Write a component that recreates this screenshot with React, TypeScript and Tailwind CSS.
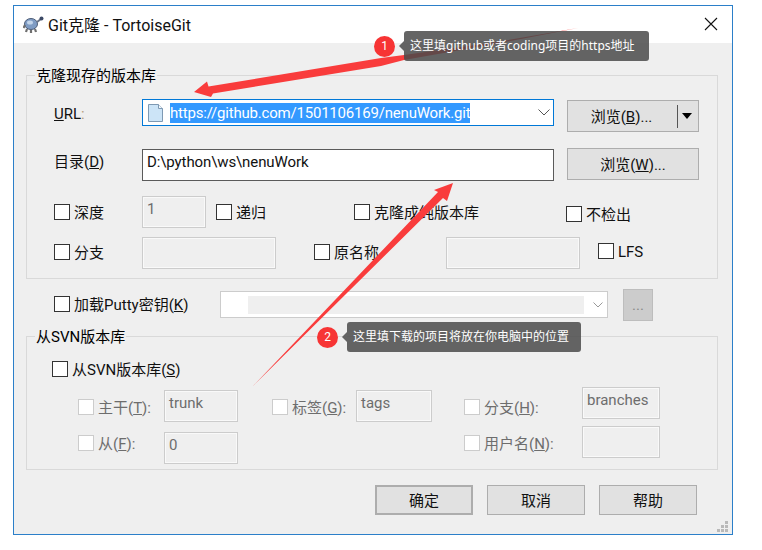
import React from 'react';

const Check: React.FC<{ label: React.ReactNode; disabled?: boolean; className?: string }> = ({ label, disabled, className = '' }) => (
    <div className={`flex items-center gap-[4px] ${disabled ? 'text-[#6d6d6d]' : 'text-[#111]'} ${className}`}>
        <span className={`size-4 shrink-0 border bg-white ${disabled ? 'border-[#cccccc]' : 'border-[#333333]'}`} />
        <span className="translate-y-px whitespace-nowrap">{label}</span>
    </div>
);

const Field: React.FC<{ value?: string; className?: string }> = ({ value, className = '' }) => (
    <div className={`h-8 shrink-0 border border-[#cccccc] pl-1 leading-6 text-[#6d6d6d] shadow-[inset_0_0_0_1px_#f9f9f9] ${className}`}>
        {value}
    </div>
);

const Btn: React.FC<{ children: React.ReactNode; className?: string }> = ({ children, className = '' }) => (
    <div className={`flex h-[30px] w-[98px] items-center justify-center border border-[#adadad] bg-[#e1e1e1] text-[#111] ${className}`}>
        <span className="translate-y-px">{children}</span>
    </div>
);

const Tip: React.FC<{ n: number; text: string; className: string; w: string }> = ({ n, text, className, w }) => (
    <div className={`absolute flex items-center ${className}`}>
        <span className="flex size-[21px] items-center justify-center rounded-full bg-[#f73434] text-[12px] text-white">{n}</span>
        <span className="ml-1 size-0 border-y-[5px] border-r-[5px] border-y-transparent border-r-[#636363]" />
        <span className={`flex h-[30px] items-center rounded-[3px] bg-[#4a4a4a]/85 pl-[6px] font-['Noto_Sans','Noto_Sans_CJK_SC',sans-serif] text-[12px] whitespace-nowrap text-white ${w}`}>{text}</span>
    </div>
);

const Turtle = () => (
    <svg width="21" height="18" viewBox="0 0 21 18" className="shrink-0">
        <ellipse cx="8" cy="8" rx="6.5" ry="5.5" fill="#7f9cc4" stroke="#4d5d78" />
        <ellipse cx="7" cy="6.5" rx="3" ry="2" fill="#c3d5ea" />
        <path d="M14 6 L18 3" stroke="#6b7486" strokeWidth="2" />
        <circle cx="18.5" cy="2.5" r="2" fill="#3c4a66" />
        <path d="M2 9 L0.5 12 M4 13 L3 16 M8 14 L8 17 M12 13 L13 16" stroke="#6f6f6f" strokeWidth="2.2" />
    </svg>
);

const Grip = () => (
    <svg width="12" height="12" viewBox="0 0 12 12" className="absolute right-[3px] bottom-[1px]" fill="#b9b9b9">
        <rect x="8" y="0" width="3" height="3" />
        <rect x="4" y="4" width="3" height="3" />
        <rect x="8" y="4" width="3" height="3" />
        <rect x="0" y="8" width="3" height="3" />
        <rect x="4" y="8" width="3" height="3" />
        <rect x="8" y="8" width="3" height="3" />
    </svg>
);

export default function App() {
    return (
        <div className="relative h-[550px] w-[762px] overflow-hidden bg-white pt-[5px] pl-[13px] font-['Roboto','Noto_Sans_CJK_SC',sans-serif] text-[15px] leading-5">
            <div className="relative flex h-[530px] w-[720px] flex-col border border-[#2b7fc9]">
                <div className="flex h-[37px] shrink-0 items-center bg-white pl-[9px]">
                    <Turtle />
                    <span className="ml-[4px] translate-y-px text-[16px] text-[#111]">Git克隆 - TortoiseGit</span>
                    <svg width="14" height="14" viewBox="0 0 14 14" className="mt-[-1px] mr-[14px] ml-auto" stroke="#111" strokeWidth="1.1" fill="none">
                        <path d="M1 1 L13 13 M13 1 L1 13" />
                    </svg>
                </div>

                <div className="flex-1 bg-[#efefef]">
                    <fieldset className="mt-[22px] ml-3 w-[692px] border border-[#d9d9d9] pb-[9px]">
                        <legend className="ml-2 px-[1px]"><span className="relative top-px">克隆现存的版本库</span></legend>
                        <div className="mt-[14px] flex h-[33px] items-start pl-[27px]">
                            <div className="w-[88px] pt-[5px] text-[#111]"><u>U</u>RL<span className="text-[#b59a7a]">:</span></div>
                            <div className="flex h-[27px] w-[412px] items-center border border-[#0078d7] bg-white pl-[5px]">
                                <svg width="15" height="18" viewBox="0 0 15 18" className="shrink-0">
                                    <path d="M0.5 0.5 H10.5 L14.5 4.5 V17.5 H0.5 Z" fill="#cce4f7" stroke="#7e99b3" />
                                    <path d="M10.5 0.5 V4.5 H14.5" fill="#f2f7fb" stroke="#7e99b3" />
                                </svg>
                                <span className="ml-[7px] bg-[#3399ff] tracking-[-0.2px] whitespace-nowrap text-white">https://github.com/1501106169/nenuWork.git</span>
                                <svg width="12" height="7" viewBox="0 0 12 7" className="mr-[3px] ml-auto" fill="none" stroke="#555">
                                    <path d="M0.5 0.5 L6 6 L11.5 0.5" />
                                </svg>
                            </div>
                            <div className="mt-px ml-[13px] flex h-8 w-[132px] items-center border border-[#adadad] bg-[#e1e1e1] text-[#111]">
                                <span className="w-[107px] translate-y-px text-center">浏览(<u>B</u>)...</span>
                                <span className="ml-[2px] h-[23px] w-px bg-[#555]" />
                                <span className="ml-[4px] size-0 border-x-[5.5px] border-t-[6px] border-x-transparent border-t-black" />
                            </div>
                        </div>
                        <div className="mt-[16px] flex h-[33px] items-start pl-[27px]">
                            <div className="w-[88px] pt-1 text-[#111]">目录(<u>D</u>)</div>
                            <div className="mt-px h-8 w-[412px] border border-[#5a5a5a] bg-white pl-1 leading-6 tracking-[-0.1px] text-[#111]">D:\python\ws\nenuWork</div>
                            <div className="ml-[13px] flex h-8 w-[132px] items-center justify-center border border-[#adadad] bg-[#e1e1e1] text-[#111]">
                                <span className="translate-y-px">浏览(<u>W</u>)...</span>
                            </div>
                        </div>
                        <div className="mt-[15px] flex h-8 items-center pl-[27px]">
                            <Check label="深度" className="w-[88px]" />
                            <Field value="1" className="w-16" />
                            <Check label="递归" className="ml-[10px] w-[138px]" />
                            <Check label="克隆成纯版本库" className="w-[212px]" />
                            <Check label="不检出" className="mt-1" />
                        </div>
                        <div className="mt-[9px] flex h-8 items-center pl-[27px]">
                            <Check label="分支" className="mb-[2px] w-[88px]" />
                            <Field className="w-[134px]" />
                            <Check label="原名称" className="mb-[2px] ml-[38px] w-[132px]" />
                            <Field className="w-[134px]" />
                            <Check label="LFS" className="mb-1 ml-[18px]" />
                        </div>
                    </fieldset>

                    <div className="mt-[10px] flex h-8 items-start pl-10">
                        <Check label={<>加载Putty密钥(<u>K</u>)</>} className="mt-[5px] w-[166px]" />
                        <div className="mt-[2px] flex h-[27px] w-[388px] items-center border border-[#cccccc] bg-white pl-[27px]">
                            <span className="h-[18px] w-[336px] bg-[#efefef]" />
                            <svg width="10" height="6" viewBox="0 0 10 6" className="ml-[9px]" fill="none" stroke="#999">
                                <path d="M0.5 0.5 L5 5 L9.5 0.5" />
                            </svg>
                        </div>
                        <div className="ml-[15px] flex h-8 w-[30px] items-center justify-center border border-[#bdbdbd] bg-[#cccccc] text-[#8a8a8a]">...</div>
                    </div>

                    <fieldset className="mt-[5px] ml-3 w-[692px] border border-[#d9d9d9] pb-[5px]">
                        <legend className="ml-2 px-[1px]"><span className="relative top-px">从SVN版本库</span></legend>
                        <div className="mt-[13px] pl-[25px]">
                            <Check label={<>从SVN版本库(<u>S</u>)</>} />
                        </div>
                        <div className="mt-2 flex items-start pl-[51px]">
                            <Check disabled label={<>主干(<u>T</u>):</>} className="mt-[10px] w-[86px]" />
                            <Field value="trunk" className="mt-[3px] w-[74px]" />
                            <Check disabled label={<>标签(<u>G</u>):</>} className="mt-[10px] ml-[34px] w-[84px]" />
                            <Field value="tags" className="mt-[3px] w-[76px]" />
                            <Check disabled label={<>分支(<u>H</u>):</>} className="mt-[10px] ml-8 w-[118px]" />
                            <Field value="branches" className="w-[78px]" />
                        </div>
                        <div className="mt-1 flex items-start pl-[51px]">
                            <Check disabled label={<>从(<u>F</u>):</>} className="mt-[7px] w-[86px]" />
                            <Field value="0" className="mt-[6px] w-[74px]" />
                            <Check disabled label={<>用户名(<u>N</u>):</>} className="mt-[7px] ml-[226px] w-[118px]" />
                            <Field className="w-[78px]" />
                        </div>
                    </fieldset>

                    <div className="mt-[15px] flex gap-[14px] pl-[361px]">
                        <Btn className="border-2 border-[#0078d7]">确定</Btn>
                        <Btn>取消</Btn>
                        <Btn>帮助</Btn>
                    </div>
                </div>
                <Grip />
            </div>

            {/* red annotation arrows drawn over the dialog */}
            <svg width="762" height="550" viewBox="0 0 762 550" className="pointer-events-none absolute top-0 left-0">
                <path d="M194 92 L207 81.5 L208.5 86.5 L381 58 L404 55 L500 41.5 L578 28 L500 43 L404 60 L381 66 L213 93.5 L211 97 Z" fill="#f93c3c" />
                <path d="M453 183 L447 201 L443 198 L252 387 L438 192 L434 190 Z" fill="#f93c3c" />
            </svg>

            <Tip n={1} text="这里填github或者coding项目的https地址" className="top-[31px] left-[374px]" w="w-[245px]" />
            <Tip n={2} text="这里填下载的项目将放在你电脑中的位置" className="top-[322px] left-[317px]" w="w-[234px]" />
        </div>
    );
}
